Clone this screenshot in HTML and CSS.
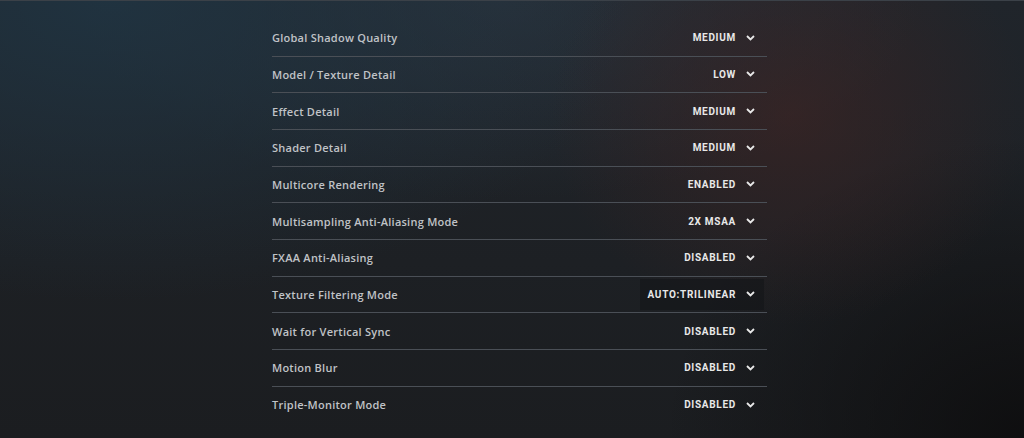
FILE: index.html
```html
<!DOCTYPE html>
<html lang="en">
<head>
    <meta charset="UTF-8">
    <meta name="viewport" content="width=device-width, initial-scale=1.0">
    <title>Video Settings</title>
    <link rel="stylesheet" href="styles.css">
</head>
<body>

<div class="screen">
    <div class="settings" id="settingsList">
        <div class="row"><span class="label">Global Shadow Quality</span><div class="select"><span class="value">Medium</span><svg class="chevron" viewBox="0 0 9 6"><polyline points="1,1 4.5,4.5 8,1"/></svg></div></div>
        <div class="row"><span class="label">Model / Texture Detail</span><div class="select"><span class="value">Low</span><svg class="chevron" viewBox="0 0 9 6"><polyline points="1,1 4.5,4.5 8,1"/></svg></div></div>
        <div class="row"><span class="label">Effect Detail</span><div class="select"><span class="value">Medium</span><svg class="chevron" viewBox="0 0 9 6"><polyline points="1,1 4.5,4.5 8,1"/></svg></div></div>
        <div class="row"><span class="label">Shader Detail</span><div class="select"><span class="value">Medium</span><svg class="chevron" viewBox="0 0 9 6"><polyline points="1,1 4.5,4.5 8,1"/></svg></div></div>
        <div class="row"><span class="label">Multicore Rendering</span><div class="select"><span class="value">Enabled</span><svg class="chevron" viewBox="0 0 9 6"><polyline points="1,1 4.5,4.5 8,1"/></svg></div></div>
        <div class="row"><span class="label">Multisampling Anti-Aliasing Mode</span><div class="select"><span class="value">2X MSAA</span><svg class="chevron" viewBox="0 0 9 6"><polyline points="1,1 4.5,4.5 8,1"/></svg></div></div>
        <div class="row"><span class="label">FXAA Anti-Aliasing</span><div class="select"><span class="value">Disabled</span><svg class="chevron" viewBox="0 0 9 6"><polyline points="1,1 4.5,4.5 8,1"/></svg></div></div>
        <div class="row"><span class="label">Texture Filtering Mode</span><div class="select hover"><span class="value">Auto:Trilinear</span><svg class="chevron" viewBox="0 0 9 6"><polyline points="1,1 4.5,4.5 8,1"/></svg></div></div>
        <div class="row"><span class="label">Wait for Vertical Sync</span><div class="select"><span class="value">Disabled</span><svg class="chevron" viewBox="0 0 9 6"><polyline points="1,1 4.5,4.5 8,1"/></svg></div></div>
        <div class="row"><span class="label">Motion Blur</span><div class="select"><span class="value">Disabled</span><svg class="chevron" viewBox="0 0 9 6"><polyline points="1,1 4.5,4.5 8,1"/></svg></div></div>
        <div class="row"><span class="label">Triple-Monitor Mode</span><div class="select"><span class="value">Disabled</span><svg class="chevron" viewBox="0 0 9 6"><polyline points="1,1 4.5,4.5 8,1"/></svg></div></div>
    </div>
</div>

</body>
</html>
```

FILE: styles.css
```css
html, body {
    margin: 0;
    height: 100%;
    overflow: hidden;
}
body {
    font-family: "Open Sans", "Noto Sans", sans-serif;
    background-color: #1d2024;
    background-image:
        radial-gradient(ellipse 240px 210px at 790px 115px, rgba(62, 36, 35, 0.65), rgba(62, 36, 35, 0) 100%),
        radial-gradient(ellipse 520px 300px at 110px 0px, rgba(32, 52, 66, 0.9), rgba(32, 52, 66, 0) 100%),
        radial-gradient(ellipse 420px 200px at 500px 0px, rgba(44, 56, 68, 0.6), rgba(44, 56, 68, 0) 100%),
        radial-gradient(ellipse 360px 300px at 1024px 438px, rgba(13, 13, 14, 0.9), rgba(13, 13, 14, 0) 100%),
        linear-gradient(180deg, #20252b 0%, #1d2024 60%, #1b1d20 100%);
}
.screen {
    height: 100%;
    border-top: 1px solid #3b4148;
    box-sizing: border-box;
    padding-top: 19px;
}
.settings {
    width: 495px;
    margin-left: 272px;
    display: flex;
    flex-direction: column;
}
.row {
    display: flex;
    justify-content: space-between;
    align-items: center;
    height: 36.67px;
    box-sizing: border-box;
    border-bottom: 1px solid #4a4f56;
}
.row:last-child {
    border-bottom: none;
}
.label {
    font-size: 11px;
    font-weight: 600;
    letter-spacing: 0.25px;
    color: #c0c3c7;
}
/* dropdown on the right */
.select {
    display: flex;
    align-items: center;
    gap: 10px;
    height: 31px;
    padding: 0 9px 0 8px;
    margin-right: 3px;
}
.select.hover {
    background-color: rgba(18, 20, 23, 0.55);
}
.value {
    font-family: Roboto, "DejaVu Sans", sans-serif;
    font-size: 10px;
    font-weight: 700;
    letter-spacing: 0.7px;
    text-transform: uppercase;
    color: #e8e8e8;
}
.chevron {
    width: 9px;
    height: 6px;
    fill: none;
    stroke: #e8e8e8;
    stroke-width: 1.8;
}
```
